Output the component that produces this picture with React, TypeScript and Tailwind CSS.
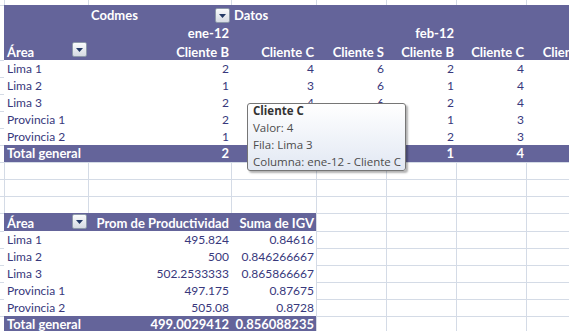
import React from "react";

const HF = "font-['Lato',sans-serif]";

type W = "s" | "a" | "b" | "c" | "d";
const WC: Record<W, string> = {
  s: "w-[4px]",
  a: "w-[84px]",
  b: "w-[143px]",
  c: "w-[85px]",
  d: "w-[70px]",
};

function Grid({ w, top = true }: { w: W; top?: boolean }) {
  return (
    <div
      className={`${WC[w]} shrink-0 h-full bg-white ${top ? "border-t" : ""} ${w === "s" ? "" : "border-l"} border-[#d4dbe6]`}
    />
  );
}

function Drop({ mt }: { mt: string }) {
  return (
    <div
      className={`w-[15px] h-[15px] shrink-0 self-start ${mt} rounded-[2px] border border-[#8d99aa] bg-gradient-to-b from-[#fafbfc] to-[#d6dbe3] flex items-center justify-center`}
    >
      <svg width="7" height="4" viewBox="0 0 7 4">
        <polygon points="0,0 7,0 3.5,4" fill="#243a66" />
      </svg>
    </div>
  );
}

function H({
  w,
  children,
  right = false,
  drop,
}: {
  w: W;
  children?: React.ReactNode;
  right?: boolean;
  drop?: string;
}) {
  return (
    <div
      className={`${WC[w]} shrink-0 h-full bg-[#64649a] flex items-end ${drop ? "justify-between pl-[3px] pr-[1px]" : right ? "justify-end pr-[2px]" : "pl-[3px]"} text-white font-bold text-[13px] leading-[15px] whitespace-nowrap overflow-hidden ${HF}`}
    >
      {children}
      {drop ? <Drop mt={drop} /> : null}
    </div>
  );
}

function D({
  w,
  children,
  right = true,
}: {
  w: W;
  children?: React.ReactNode;
  right?: boolean;
}) {
  return (
    <div
      className={`${WC[w]} shrink-0 h-full bg-white flex items-end pb-[1px] ${right ? "justify-end pr-[2px]" : "pl-[3px]"} text-[#38387c] text-[12px] leading-[15px] whitespace-nowrap overflow-hidden ${HF}`}
    >
      {children}
    </div>
  );
}

function T({ w, children }: { w: W; children?: React.ReactNode }) {
  return (
    <div
      className={`${WC[w]} shrink-0 h-full bg-[#64649a] flex items-end pb-[1px] ${w === "a" ? "pl-[3px]" : "justify-end pr-[2px]"} text-white font-bold text-[13px] leading-[15px] whitespace-nowrap overflow-hidden ${HF}`}
    >
      {children}
    </div>
  );
}

const top: [string, string, string, string, string, string][] = [
  ["Lima 1", "2", "4", "6", "2", "4"],
  ["Lima 2", "1", "3", "6", "1", "4"],
  ["Lima 3", "2", "4", "6", "2", "4"],
  ["Provincia 1", "2", "", "", "1", "3"],
  ["Provincia 2", "1", "", "", "2", "3"],
];

const bottom: [string, string, string][] = [
  ["Lima 1", "495.824", "0.84616"],
  ["Lima 2", "500", "0.846266667"],
  ["Lima 3", "502.2533333", "0.865866667"],
  ["Provincia 1", "497.175", "0.87675"],
  ["Provincia 2", "505.08", "0.8728"],
];

export default function App() {
  return (
    <div className="relative w-[569px] h-[331px] overflow-hidden bg-white">
      <div className="flex flex-col w-[596px]">
        {/* row 0 */}
        <div className="flex h-[5px]">
          <Grid w="s" top={false} />
          <Grid w="a" top={false} />
          <Grid w="b" top={false} />
          <Grid w="c" top={false} />
          <Grid w="d" top={false} />
          <Grid w="d" top={false} />
          <Grid w="d" top={false} />
          <Grid w="d" top={false} />
        </div>
        {/* header row 1 */}
        <div className="flex h-[18px]">
          <Grid w="s" />
          <H w="a" />
          <H w="b" drop="mt-[3px]">
            <span>Codmes</span>
          </H>
          <H w="c">Datos</H>
          <H w="d" />
          <H w="d" />
          <H w="d" />
          <H w="d" />
        </div>
        {/* header row 2 */}
        <div className="flex h-[18px]">
          <Grid w="s" top={false} />
          <H w="a" />
          <H w="b" right>
            ene-12
          </H>
          <H w="c" />
          <H w="d" />
          <H w="d" right>
            feb-12
          </H>
          <H w="d" />
          <H w="d" />
        </div>
        {/* header row 3 */}
        <div className="flex h-[19px]">
          <Grid w="s" top={false} />
          <H w="a" drop="mt-[1px]">
            <span>Área</span>
          </H>
          <H w="b" right>
            Cliente B
          </H>
          <H w="c" right>
            Cliente C
          </H>
          <H w="d" right>
            Cliente S
          </H>
          <H w="d" right>
            Cliente B
          </H>
          <H w="d" right>
            Cliente C
          </H>
          <H w="d" right>
            Cliente S
          </H>
        </div>
        {top.map((r) => (
          <div key={r[0]} className="flex h-[17px]">
            <Grid w="s" />
            <D w="a" right={false}>
              {r[0]}
            </D>
            <D w="b">{r[1]}</D>
            <D w="c">{r[2]}</D>
            <D w="d">{r[3]}</D>
            <D w="d">{r[4]}</D>
            <D w="d">{r[5]}</D>
            <D w="d" />
          </div>
        ))}
        <div className="flex h-[17px]">
          <Grid w="s" />
          <T w="a">Total general</T>
          <T w="b">2</T>
          <T w="c" />
          <T w="d" />
          <T w="d">1</T>
          <T w="d">4</T>
          <T w="d" />
        </div>
        {[0, 1, 2].map((i) => (
          <div key={i} className="flex h-[17px]">
            <Grid w="s" />
            <Grid w="a" />
            <Grid w="b" />
            <Grid w="c" />
            <Grid w="d" />
            <Grid w="d" />
            <Grid w="d" />
            <Grid w="d" />
          </div>
        ))}
        {/* second pivot header */}
        <div className="flex h-[18px]">
          <Grid w="s" />
          <H w="a" drop="mt-[1px]">
            <span>Área</span>
          </H>
          <H w="b" right>
            Prom de Productividad
          </H>
          <H w="c" right>
            Suma de IGV
          </H>
          <Grid w="d" />
          <Grid w="d" />
          <Grid w="d" />
          <Grid w="d" />
        </div>
        {bottom.map((r) => (
          <div key={r[0]} className="flex h-[17px]">
            <Grid w="s" />
            <D w="a" right={false}>
              {r[0]}
            </D>
            <D w="b">{r[1]}</D>
            <D w="c">{r[2]}</D>
            <Grid w="d" />
            <Grid w="d" />
            <Grid w="d" />
            <Grid w="d" />
          </div>
        ))}
        <div className="flex h-[17px]">
          <Grid w="s" />
          <T w="a">Total general</T>
          <T w="b">499.0029412</T>
          <T w="c">0.856088235</T>
          <Grid w="d" />
          <Grid w="d" />
          <Grid w="d" />
          <Grid w="d" />
        </div>
      </div>

      {/* tooltip */}
      <div className="absolute left-[247px] top-[103px] w-[159px] h-[68px] rounded-[3px] border border-[#767676] bg-gradient-to-b from-[#ffffff] to-[#e2e8f3] shadow-[2px_2px_2px_rgba(0,0,0,0.3)] pl-[5px] font-['Open_Sans',sans-serif] text-[11.5px] leading-[17px] text-[#4c4c4c] whitespace-nowrap overflow-hidden">
        <div className="-mt-[2px]">
          <div className="font-bold text-[#333333]">Cliente C</div>
          <div>Valor: 4</div>
          <div>Fila: Lima 3</div>
          <div>Columna: ene-12 - Cliente C</div>
        </div>
      </div>
    </div>
  );
}
